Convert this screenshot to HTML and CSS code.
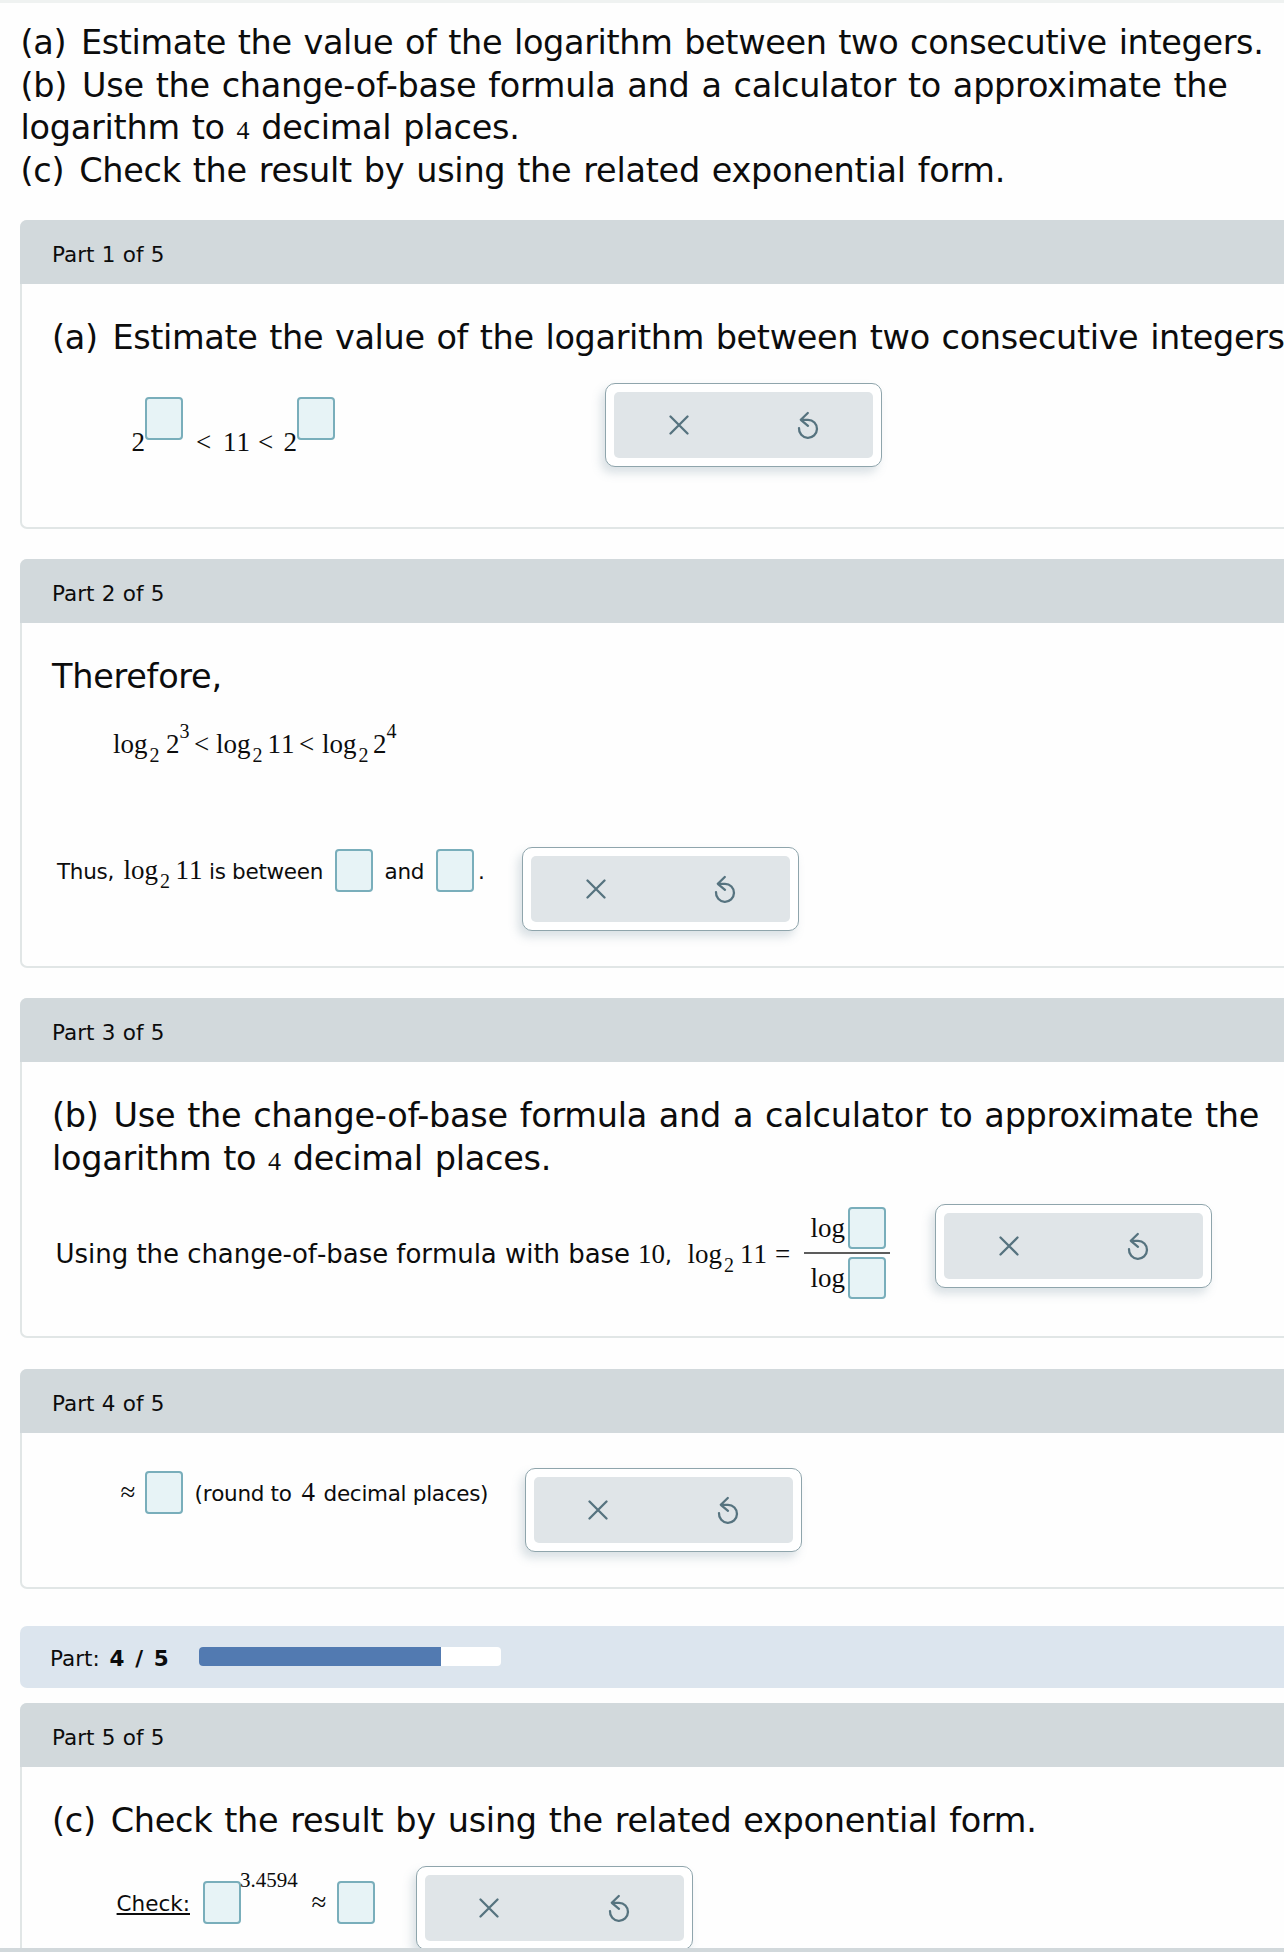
FILE: index.html
```html
<!DOCTYPE html>
<html lang="en">
<head>
    <meta charset="UTF-8">
    <title>Estimating logarithms</title>
    <link rel="stylesheet" href="styles.css">
</head>
<body>
    <svg class="defs" width="0" height="0">
        <symbol id="clear" viewBox="0 0 20 20">
            <path d="M1.5 1.5 L18.5 18.5 M18.5 1.5 L1.5 18.5"/>
        </symbol>
        <symbol id="undo" viewBox="0 0 24 30">
            <path d="M11.8 3 L4.8 9.8 L12 15.8 M4.8 9.8 H12 A9 9 0 1 1 3 18.2"/>
        </symbol>
    </svg>

    <div class="intro">
        <span class="estimate"><span class="mark">(a)</span> Estimate the value of the logarithm between two consecutive integers.</span><br>
        <span class="mark">(b)</span> Use the change-of-base formula and a calculator to approximate the<br>
        logarithm to <span class="num">4</span> decimal places.<br>
        <span class="mark">(c)</span> Check the result by using the related exponential form.
    </div>

    <section class="part part1">
        <div class="part-header">Part 1 of 5</div>
        <div class="question estimate"><span class="mark">(a)</span> Estimate the value of the logarithm between two consecutive integers</div>
        <div class="row">
            <div class="line bounds">
                <span>2</span>
                <span><i class="box raised"></i></span>
                <span>&lt;</span>
                <span>11</span>
                <span>&lt;</span>
                <span>2</span>
                <span><i class="box raised"></i></span>
            </div>
            <div class="tools">
                <button><svg class="clear"><use href="#clear"/></svg></button>
                <button><svg class="undo"><use href="#undo"/></svg></button>
            </div>
        </div>
    </section>

    <section class="part part2">
        <div class="part-header">Part 2 of 5</div>
        <div class="question">Therefore,</div>
        <div class="line chain">
            <span>log<sub>2</sub></span>
            <span>2<sup>3</sup></span>
            <span>&lt;</span>
            <span>log<sub>2</sub></span>
            <span>11</span>
            <span>&lt;</span>
            <span>log<sub>2</sub></span>
            <span>2<sup>4</sup></span>
        </div>
        <div class="row">
            <div class="line between">
                <span class="text">Thus,</span>
                <span>log<sub>2</sub></span>
                <span>11</span>
                <span class="text">is between</span>
                <span><i class="box"></i></span>
                <span class="text">and</span>
                <span><i class="box"></i></span>
                <span class="text">.</span>
            </div>
            <div class="tools">
                <button><svg class="clear"><use href="#clear"/></svg></button>
                <button><svg class="undo"><use href="#undo"/></svg></button>
            </div>
        </div>
    </section>

    <section class="part part3">
        <div class="part-header">Part 3 of 5</div>
        <div class="question">
            <span class="mark">(b)</span> Use the change-of-base formula and a calculator to approximate the<br>
            logarithm to <span class="num">4</span> decimal places.
        </div>
        <div class="row">
            <div class="line formula">
                <span class="text big">Using the change-of-base formula with base</span>
                <span>10<span class="text">,</span></span>
                <span>log<sub>2</sub></span>
                <span>11</span>
                <span>=</span>
                <span>
                    <span class="fraction">
                        <span class="top">log<i class="box"></i></span>
                        <span class="bottom">log<i class="box"></i></span>
                    </span>
                </span>
            </div>
            <div class="tools">
                <button><svg class="clear"><use href="#clear"/></svg></button>
                <button><svg class="undo"><use href="#undo"/></svg></button>
            </div>
        </div>
    </section>

    <section class="part part4">
        <div class="part-header">Part 4 of 5</div>
        <div class="row">
            <div class="line rounding">
                <span>≈</span>
                <span><i class="box"></i></span>
                <span class="text">(round to</span>
                <span>4</span>
                <span class="text">decimal places)</span>
            </div>
            <div class="tools">
                <button><svg class="clear"><use href="#clear"/></svg></button>
                <button><svg class="undo"><use href="#undo"/></svg></button>
            </div>
        </div>
    </section>

    <div class="progress">
        <span class="progress-label">Part: <b>4 / 5</b></span>
        <div class="bar"><div class="fill" style="width: 80%"></div></div>
    </div>

    <section class="part part5">
        <div class="part-header">Part 5 of 5</div>
        <div class="question"><span class="mark">(c)</span> Check the result by using the related exponential form.</div>
        <div class="row">
            <div class="line check">
                <span class="text"><u>Check:</u></span>
                <span><i class="box"></i></span>
                <span><sup class="exp">3.4594</sup></span>
                <span>≈</span>
                <span><i class="box"></i></span>
            </div>
            <div class="tools">
                <button><svg class="clear"><use href="#clear"/></svg></button>
                <button><svg class="undo"><use href="#undo"/></svg></button>
            </div>
        </div>
    </section>

    <div class="bottom-edge"></div>
</body>
</html>
```

FILE: styles.css
```css
* {
    box-sizing: border-box;
}
body {
    margin: 0;
    height: 1952px;
    overflow: hidden;
    position: relative;
    background-color: #fefefe;
    border-top: 3px solid #eff2f1;
    color: #0c0c0c;
    font-family: Verdana, "DejaVu Sans", sans-serif;
}
.defs {
    position: absolute;
}
.intro, .question {
    font-size: 33.5px;
    line-height: 42.6px;
    letter-spacing: -0.27px;
    word-spacing: 1.5px;
    white-space: nowrap;
}
.estimate {
    letter-spacing: -0.36px;
}
.mark {
    margin-right: 3px;
}
.intro {
    padding: 19px 0 0 20.5px;
    height: 217px;
}
.num {
    font-family: "Liberation Serif", serif;
    font-size: 26px;
    line-height: 1;
}

/* parts */
.part {
    margin-left: 20px;
    border: 2px solid #e1e6e6;
    border-right: none;
    border-radius: 7px 0 0 7px;
}
.part-header {
    height: 64px;
    margin: -2px 0 0 -2px;
    padding: 14px 0 0 32px;
    background-color: #d2d9dc;
    border-radius: 7px 0 0 0;
    font-size: 21.5px;
    line-height: 42px;
    word-spacing: 0.5px;
}
.question {
    padding: 33px 0 0 30px;
}
.part1 {
    height: 309px;
    margin-bottom: 30px;
}
.part2 {
    height: 409px;
    margin-bottom: 30px;
}
.part3 {
    height: 340px;
    margin-bottom: 31px;
}
.part4 {
    height: 220px;
    margin-bottom: 37px;
}
.part5 {
    height: 300px;
}

/* formula lines */
.row {
    display: flex;
    align-items: flex-start;
    padding-left: 29px;
}
.line {
    display: grid;
    align-items: baseline;
    flex: none;
    font-family: "Liberation Serif", serif;
    font-size: 27px;
    line-height: 60px;
    font-kerning: none;
    white-space: nowrap;
}
.text {
    font-family: Verdana, "DejaVu Sans", sans-serif;
    font-size: 21.5px;
    letter-spacing: -0.3px;
}
.text.big {
    font-size: 26px;
    letter-spacing: -0.04px;
}
.check .text {
    letter-spacing: 0;
}
sub, sup {
    font-size: 20px;
    line-height: 0;
}
sub {
    vertical-align: -9px;
    margin-left: 2px;
}
sup {
    vertical-align: 15px;
}
.exp {
    font-size: 21px;
    vertical-align: 24px;
}
.box {
    display: inline-block;
    width: 38px;
    height: 43px;
    vertical-align: -13px;
    border: 2px solid #79aebb;
    border-radius: 4px;
    background-color: #e7f3f6;
}
.box.raised {
    vertical-align: 11px;
}
.fraction {
    display: inline-block;
    vertical-align: -24px;
    width: 86px;
    line-height: 42px;
}
.fraction .top, .fraction .bottom {
    display: flex;
    gap: 3px;
    padding-left: 7px;
}
.fraction .top {
    padding-bottom: 3px;
    border-bottom: 2px solid #5c5c5c;
    margin-bottom: 3px;
}
.fraction .box {
    height: 42px;
}
.bounds {
    grid-template-columns: 13.5px 51px 27px 35px 25.5px 13.5px 38px;
    margin: 0 270px 0 80.6px;
    line-height: 120px;
}
.chain {
    grid-template-columns: 53px 28px 22px 51.5px 31.5px 23px 51px 30px;
    margin: 15px 0 0 91px;
}
.between {
    grid-template-columns: 66.5px 52px 33.5px 125.5px 50px 51px 42.5px 8px;
    margin: 0 36px 0 6px;
}
.formula {
    grid-template-columns: 582.5px 49.5px 52.5px 35px 28.5px 86px;
    margin: 0 45.3px 0 4.6px;
    line-height: 120px;
}
.rounding {
    grid-template-columns: 24px 50px 107px 22px 165px;
    margin: 0 36px 0 69.6px;
}
.check {
    grid-template-columns: 86px 37.5px 71.5px 25.5px 38px;
    margin: 0 40.5px 0 65.6px;
    line-height: 80px;
}
.part1 .row {
    padding-top: 22px;
}
.part2 .row {
    padding-top: 66px;
}
.part3 .row {
    padding-top: 14px;
}
.part4 .row {
    padding-top: 29px;
}
.part5 .row {
    padding-top: 19px;
}

/* clear / undo */
.tools {
    display: flex;
    flex: none;
    width: 277px;
    height: 84px;
    padding: 8px;
    border: 1.5px solid #8fa5ac;
    border-radius: 10px;
    background-color: #fff;
    box-shadow: -4px 6px 10px rgba(110, 140, 155, 0.25);
}
.part1 .tools {
    margin-top: 1px;
}
.part2 .tools {
    margin-top: 7px;
}
.part3 .tools {
    margin-top: 10px;
}
.part4 .tools {
    margin-top: 6px;
}
.part5 .tools {
    margin-top: 4px;
}
button {
    flex: 1;
    display: flex;
    align-items: center;
    justify-content: center;
    padding: 0;
    border: none;
    background-color: #e0e5e8;
}
button:first-child {
    border-radius: 5px 0 0 5px;
}
button:last-child {
    border-radius: 0 5px 5px 0;
}
button svg {
    fill: none;
    stroke: #56737f;
    stroke-width: 2.3;
    stroke-linecap: round;
    stroke-linejoin: round;
}
.clear {
    width: 20px;
    height: 20px;
}
.undo {
    width: 24px;
    height: 30px;
}

/* progress */
.progress {
    display: flex;
    height: 62px;
    margin: 0 0 15px 20px;
    padding-left: 30px;
    border-radius: 7px 0 0 7px;
    background-color: #dce5ee;
    font-size: 21.5px;
    line-height: 65px;
}
.progress-label {
    width: 149px;
    white-space: nowrap;
}
.progress-label b {
    margin-left: 3px;
    letter-spacing: 1.6px;
}
.bar {
    width: 302px;
    height: 19px;
    margin-top: 21px;
    border-radius: 4px;
    background-color: #fff;
    overflow: hidden;
}
.fill {
    height: 100%;
    background-color: #527ab1;
}
.bottom-edge {
    position: absolute;
    left: 0;
    right: 0;
    bottom: 0;
    height: 4px;
    background-color: #d1d8db;
}
```
